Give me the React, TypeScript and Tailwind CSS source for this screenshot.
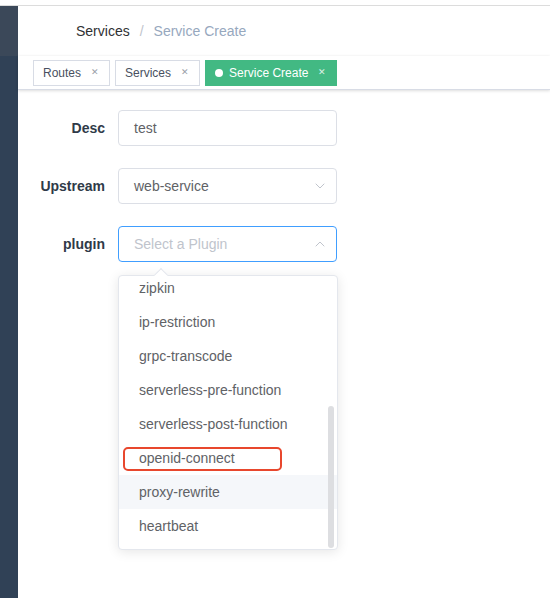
import { ChevronDown, ChevronUp } from "lucide-react";

const tags = [
  { name: "Routes", active: false },
  { name: "Services", active: false },
  { name: "Service Create", active: true },
];

const plugins = [
  "zipkin",
  "ip-restriction",
  "grpc-transcode",
  "serverless-pre-function",
  "serverless-post-function",
  "openid-connect",
  "proxy-rewrite",
  "heartbeat",
];

function Field({ label, children }: { label: string; children: React.ReactNode }) {
  return (
    <div className="flex items-center h-[36px]">
      <label className="w-[87px] text-right text-[14px] font-bold text-[#2f3a48]">
        {label}
      </label>
      <div className="ml-[13px] w-[219px]">{children}</div>
    </div>
  );
}

export default function App() {
  return (
    <div
      className="relative w-[550px] h-[598px] overflow-hidden bg-white flex flex-col"
      style={{ fontFamily: '"Liberation Sans", Arial, sans-serif' }}
    >
      <div className="h-[5px] bg-white" />
      <div className="flex flex-1 border-t border-[#dcdcdc]">
        {/* sidebar */}
        <aside className="w-[18px] flex flex-col">
          <div className="h-[50px] bg-[#3b4859]" />
          <div className="flex-1 bg-[#304156]" />
        </aside>

        <main className="flex-1 flex flex-col">
          {/* navbar */}
          <div className="h-[50px] flex items-center pl-[58px] text-[14px]">
            <span className="text-[#303133]">Services</span>
            <span className="mx-[10px] text-[#c0c4cc]">/</span>
            <span className="text-[#97a8be]">Service Create</span>
          </div>

          {/* tags view */}
          <div className="h-[34px] flex items-center pl-[15px] gap-[5px] border-b border-[#d8dce5] shadow-[0_1px_3px_0_rgba(0,0,0,0.12),0_0_3px_0_rgba(0,0,0,0.04)]">
            {tags.map((t) =>
              t.active ? (
                <div
                  key={t.name}
                  className="h-[26px] flex items-center pl-[9px] pr-[6px] bg-[#42b983] border border-[#42b983] text-white text-[12px]"
                >
                  <span className="w-[8px] h-[8px] rounded-full bg-white mr-[6px]" />
                  {t.name}
                  <span className="ml-[6px] w-[16px] text-center text-[9px] opacity-80">✕</span>
                </div>
              ) : (
                <div
                  key={t.name}
                  className="h-[26px] flex items-center pl-[9px] pr-[6px] border border-[#d8dce5] text-[#495060] text-[12px]"
                >
                  {t.name}
                  <span className="ml-[6px] w-[16px] text-center text-[9px] text-[#9aa0a8]">✕</span>
                </div>
              )
            )}
          </div>

          {/* form */}
          <div className="pt-[20px] flex flex-col gap-[22px]">
            <Field label="Desc">
              <div className="h-[36px] flex items-center px-[15px] border border-[#dcdfe6] rounded-[4px] text-[14px] text-[#606266]">
                test
              </div>
            </Field>
            <Field label="Upstream">
              <div className="h-[36px] flex items-center justify-between pl-[15px] pr-[8px] border border-[#dcdfe6] rounded-[4px] text-[14px] text-[#606266]">
                web-service
                <ChevronDown size={16} strokeWidth={1.5} className="text-[#c0c4cc]" />
              </div>
            </Field>
            <Field label="plugin">
              <div className="h-[36px] flex items-center justify-between pl-[15px] pr-[8px] border border-[#409eff] rounded-[4px] text-[14px] text-[#c0c4cc]">
                Select a Plugin
                <ChevronUp size={16} strokeWidth={1.5} className="text-[#c0c4cc]" />
              </div>
            </Field>
          </div>
        </main>
      </div>

      {/* dropdown popper */}
      <div className="absolute left-[118px] top-[275px] w-[220px] h-[275px] bg-white border border-[#e4e7ed] rounded-[4px] shadow-[0_2px_12px_0_rgba(0,0,0,0.1)]">
        <div className="absolute left-[37px] -top-[6px] w-[10px] h-[10px] bg-white border-l border-t border-[#e4e7ed] rotate-45" />
        <div className="relative h-full overflow-hidden rounded-[4px]">
          <ul className="-mt-[5px]">
            {plugins.map((p) => (
              <li
                key={p}
                className={
                  "h-[34px] flex items-center pl-[20px] text-[14px] text-[#606266] " +
                  (p === "proxy-rewrite" ? "bg-[#f5f7fa]" : "")
                }
              >
                {p}
              </li>
            ))}
          </ul>
          <div className="absolute right-[3px] top-[130px] w-[6px] h-[142px] rounded-full bg-[#dddee1]" />
        </div>
      </div>

      {/* red highlight */}
      <div className="absolute left-[123px] top-[447px] w-[159px] h-[24px] border-2 border-[#e8472d] rounded-[5px]" />
    </div>
  );
}
